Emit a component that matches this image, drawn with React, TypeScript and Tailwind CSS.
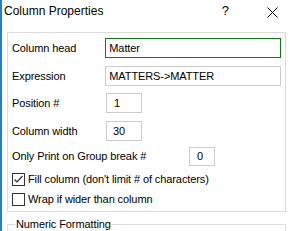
import React from 'react';

const Field: React.FC<{ value: string; w: string; h?: string; active?: boolean; pad?: string }> = ({ value, w, h = 'h-[20px]', active, pad = 'pl-[3px]' }) => (
    <div className={`${w} ${h} flex items-center ${pad} border ${active ? 'border-[#107c10]' : 'border-[#cccccc]'} bg-white`}>
        {value}
    </div>
);

const Check: React.FC<{ checked?: boolean }> = ({ checked }) => (
    <div className="w-[13px] h-[13px] border border-[#333333] bg-white flex items-center justify-center shrink-0">
        {checked && (
            <svg width="11" height="11" viewBox="0 0 11 11">
                <path d="M1.5 5.5 L4 8 L9.5 2" fill="none" stroke="#333333" strokeWidth="1.2" />
            </svg>
        )}
    </div>
);

const App: React.FC = () => {
    return (
        <div className="w-[293px] h-[231px] bg-white border-l-2 border-[#1883d7] overflow-hidden text-black font-['Liberation_Sans',Arial,sans-serif]">
            {/* title bar */}
            <div className="h-[32px] flex items-start pt-[3px]">
                <span className="ml-[2px] text-[12px] leading-[16px]">Column Properties</span>
                <span className="ml-auto mt-[1px] text-[13px] leading-[14px] mr-[38px]">?</span>
                <svg className="mt-[4px] mr-[15px]" width="11" height="11" viewBox="0 0 11 11">
                    <path d="M0.5 0.5 L10.5 10.5 M10.5 0.5 L0.5 10.5" stroke="#000" strokeWidth="1" />
                </svg>
            </div>

            <div className="ml-[5px] w-[279px] h-[180px] border border-[#dcdcdc] px-[4px] pt-[5px] text-[11px] tracking-[-0.1px]">
                <div className="flex items-center">
                    <span className="w-[94px]">Column head</span>
                    <Field value="Matter" w="w-[177px]" active />
                </div>
                <div className="flex items-center mt-[8px]">
                    <span className="w-[94px]">Expression</span>
                    <Field value="MATTERS->MATTER" w="w-[177px]" />
                </div>
                <div className="flex items-center mt-[7px]">
                    <span className="w-[94px]">Position #</span>
                    <Field value="1" w="w-[36px]" pad="pl-[7px]" />
                </div>
                <div className="flex items-center mt-[8px]">
                    <span className="w-[94px]">Column width</span>
                    <Field value="30" w="w-[36px]" pad="pl-[6px]" />
                </div>
                <div className="flex items-center mt-[6px]">
                    <span className="w-[177px]">Only Print on Group break #</span>
                    <Field value="0" w="w-[26px]" h="h-[19px]" pad="pl-[7px]" />
                </div>
                <div className="flex items-center gap-[3px] mt-[7px] leading-[13px]">
                    <Check checked />
                    <span>Fill column (don't limit # of characters)</span>
                </div>
                <div className="flex items-center gap-[3px] mt-[7px] leading-[13px]">
                    <Check />
                    <span>Wrap if wider than column</span>
                </div>
            </div>

            <fieldset className="ml-[5px] mt-[6px] w-[279px] h-[40px] border border-[#dcdcdc] px-[7px]">
                <legend className="px-[1px] text-[11px] leading-[13px] tracking-[-0.1px]">Numeric Formatting</legend>
            </fieldset>
        </div>
    );
};

export default App;
